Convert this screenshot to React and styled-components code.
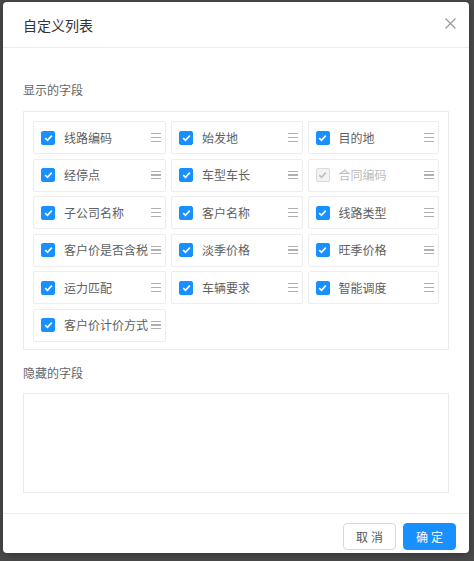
import React from "react";
import styled, { createGlobalStyle } from "styled-components";

const GlobalStyle = createGlobalStyle`
  html, body {
    margin: 0;
    padding: 0;
    background: #4a4a4a;
    font-family: "Noto Sans CJK SC", "Noto Sans", sans-serif;
  }
`;

const Page = styled.div`
  width: 474px;
  height: 561px;
  padding: 2px 0 0 3px;
  box-sizing: border-box;
`;

const Modal = styled.div`
  width: 466px;
  height: 551px;
  background: #fff;
  border-radius: 4px;
  display: flex;
  flex-direction: column;
  box-shadow: 0 2px 8px rgba(0, 0, 0, 0.3);
`;

const Header = styled.div`
  height: 45px;
  border-bottom: 1px solid #ececec;
  display: flex;
  align-items: center;
  justify-content: space-between;
  padding: 0 8px 0 20px;
`;

const Title = styled.div`
  font-size: 14px;
  color: #333;
  line-height: 20px;
`;

const CloseButton = styled.button`
  border: 0;
  background: none;
  padding: 0;
  width: 22px;
  height: 22px;
  display: flex;
  align-items: center;
  justify-content: center;
  margin-top: -2px;
  cursor: pointer;
`;

const Body = styled.div`
  flex: 1;
  padding: 32px 20px 20px;
  display: flex;
  flex-direction: column;
`;

const SectionLabel = styled.div`
  font-size: 12px;
  line-height: 20px;
  color: #666;
  margin-top: ${(p) => p.$top || 0}px;
  margin-bottom: ${(p) => p.$bottom || 10}px;
`;

const FieldBox = styled.div`
  border: 1px solid #ebebeb;
  padding: 9px 9px 7px 9px;
  display: grid;
  grid-template-columns: repeat(3, 1fr);
  column-gap: 5px;
  row-gap: 4.5px;
  min-height: ${(p) => p.$minHeight || 0}px;
  box-sizing: border-box;
  align-content: start;
`;

const Item = styled.div`
  height: 33px;
  box-sizing: border-box;
  border: 1px solid #ededed;
  border-radius: 2px;
  display: flex;
  align-items: center;
  padding: 0 3px 0 7px;
`;

const Box = styled.span`
  width: 14px;
  height: 14px;
  border-radius: 2px;
  box-sizing: border-box;
  flex: none;
  display: flex;
  align-items: center;
  justify-content: center;
  background: ${(p) => (p.$disabled ? "#f3f3f3" : "#1890ff")};
  border: 1px solid ${(p) => (p.$disabled ? "#d9d9d9" : "#1890ff")};
`;

const Label = styled.span`
  flex: 1;
  margin-left: 9px;
  font-size: 12px;
  line-height: 16px;
  white-space: nowrap;
  color: ${(p) => (p.$disabled ? "#bcbcbc" : "#606060")};
`;

const Handle = styled.span`
  width: 10px;
  height: 9px;
  flex: none;
  display: flex;
  flex-direction: column;
  justify-content: space-between;
  margin: 0 1px 0 3px;
  span {
    height: 1.3px;
    background: #b0b0b0;
  }
`;

const Footer = styled.div`
  border-top: 1px solid #ececec;
  padding: 9px 13px 0;
  height: 40px;
  box-sizing: border-box;
  display: flex;
  justify-content: flex-end;
  gap: 7px;
`;

const Button = styled.button`
  width: 53px;
  height: 27px;
  border-radius: 4px;
  font-family: inherit;
  font-size: 12px;
  letter-spacing: 3px;
  padding: 0 0 0 3px;
  cursor: pointer;
  border: 1px solid ${(p) => (p.$primary ? "#1890ff" : "#d9d9d9")};
  background: ${(p) => (p.$primary ? "#1890ff" : "#fff")};
  color: ${(p) => (p.$primary ? "#fff" : "#555")};
`;

const fields = [
  { name: "线路编码" },
  { name: "始发地" },
  { name: "目的地" },
  { name: "经停点" },
  { name: "车型车长" },
  { name: "合同编码", disabled: true },
  { name: "子公司名称" },
  { name: "客户名称" },
  { name: "线路类型" },
  { name: "客户价是否含税" },
  { name: "淡季价格" },
  { name: "旺季价格" },
  { name: "运力匹配" },
  { name: "车辆要求" },
  { name: "智能调度" },
  { name: "客户价计价方式" },
];

const Check = ({ disabled }) => (
  <Box $disabled={disabled}>
    <svg width="9" height="8" viewBox="0 0 9 8">
      <path
        d="M1.2 4.2 L3.5 6.3 L7.8 1.6"
        fill="none"
        stroke={disabled ? "#c0c0c0" : "#fff"}
        strokeWidth="1.6"
      />
    </svg>
  </Box>
);

const FieldItem = ({ name, disabled }) => (
  <Item>
    <Check disabled={disabled} />
    <Label $disabled={disabled}>{name}</Label>
    <Handle>
      <span />
      <span />
      <span />
    </Handle>
  </Item>
);

export default function App() {
  return (
    <Page>
      <GlobalStyle />
      <Modal>
        <Header>
          <Title>自定义列表</Title>
          <CloseButton aria-label="close">
            <svg width="11" height="11" viewBox="0 0 11 11">
              <path d="M0.5 0.5 L10.5 10.5 M10.5 0.5 L0.5 10.5" stroke="#999" strokeWidth="1.2" />
            </svg>
          </CloseButton>
        </Header>
        <Body>
          <SectionLabel $bottom={11}>显示的字段</SectionLabel>
          <FieldBox>
            {fields.map((f) => (
              <FieldItem key={f.name} {...f} />
            ))}
          </FieldBox>
          <SectionLabel $top={13}>隐藏的字段</SectionLabel>
          <FieldBox $minHeight={100} />
        </Body>
        <Footer>
          <Button>取消</Button>
          <Button $primary>确定</Button>
        </Footer>
      </Modal>
    </Page>
  );
}
